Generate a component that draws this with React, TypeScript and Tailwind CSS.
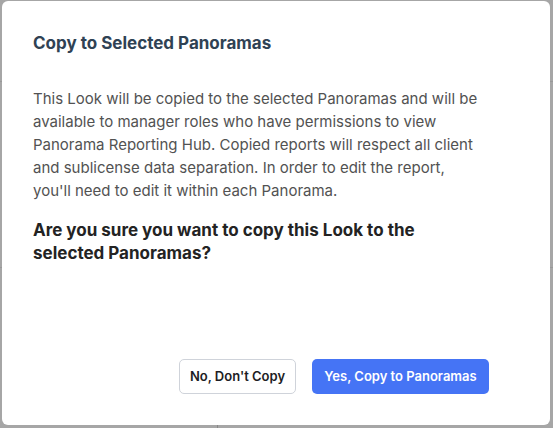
export default function App() {
  return (
    <div className="relative w-[553px] h-[428px] bg-[#a6a6a6] overflow-hidden" style={{ fontFamily: "Inter, 'Liberation Sans', sans-serif" }}>
      {/* faint page behind the overlay */}
      <div className="absolute left-0 right-0 top-[81px] h-px bg-[#999]" />
      <div className="absolute left-0 right-0 top-[267px] h-px bg-[#999]" />
      <div className="absolute left-[217px] top-[425px] w-px h-[3px] bg-[#888]" />

      <div className="absolute left-[2px] top-[1px] w-[548px] h-[424px] bg-white rounded-[6px] flex flex-col pl-[31px] pr-[30px]">
        <h2 className="mt-[31px] text-[17px] leading-[22px] font-bold text-[#2f4254]">Copy to Selected Panoramas</h2>
        <p className="mt-[33px] text-[15px] leading-[23px] text-[#525252] w-[450px]">
          This Look will be copied to the selected Panoramas and will be available to manager roles who have permissions to view Panorama Reporting Hub. Copied reports will respect all client and sublicense data separation. In order to edit the report, you'll need to edit it within each Panorama.
        </p>
        <p className="mt-[17px] text-[17px] leading-[23px] font-bold text-[#232323] w-[450px]">
          Are you sure you want to copy this Look to the selected Panoramas?
        </p>
        <div className="mt-auto mb-[31px] flex justify-end gap-[16px] pr-[31px]">
          <button className="h-[35px] w-[117px] rounded-[5px] border border-[#cfd3da] bg-white text-[13px] font-semibold text-[#1d1d24]">
            No, Don't Copy
          </button>
          <button className="h-[35px] w-[177px] rounded-[5px] bg-[#4574f5] text-[13px] font-semibold text-white">
            Yes, Copy to Panoramas
          </button>
        </div>
      </div>
    </div>
  );
}
